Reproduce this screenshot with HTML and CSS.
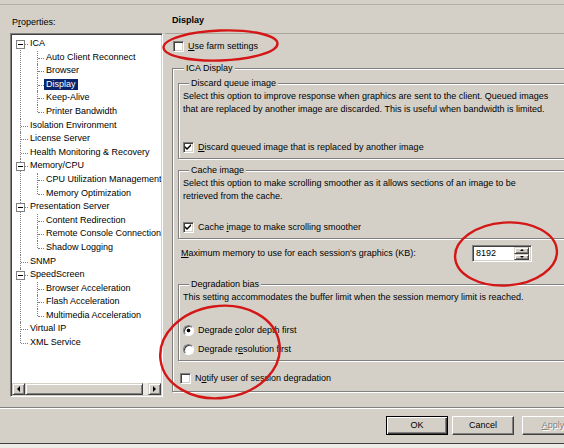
FILE: index.html
```html
<!DOCTYPE html>
<html>
<head>
<meta charset="utf-8">
<link rel="stylesheet" href="styles.css">
</head>
<body>
<div class="window">
  <div class="main">
    <div class="left">
      <div class="lbl">P<u>r</u>operties:</div>
      <div class="treebox">
        <ul class="tree">
          <li><span class="exp"></span>ICA
            <ul>
              <li>Auto Client Reconnect</li>
              <li>Browser</li>
              <li><span class="sel">Display</span></li>
              <li>Keep-Alive</li>
              <li>Printer Bandwidth</li>
            </ul>
          </li>
          <li>Isolation Environment</li>
          <li>License Server</li>
          <li>Health Monitoring &amp; Recovery</li>
          <li><span class="exp"></span>Memory/CPU
            <ul>
              <li>CPU Utilization Management</li>
              <li>Memory Optimization</li>
            </ul>
          </li>
          <li><span class="exp"></span>Presentation Server
            <ul>
              <li>Content Redirection</li>
              <li>Remote Console Connection</li>
              <li>Shadow Logging</li>
            </ul>
          </li>
          <li>SNMP</li>
          <li><span class="exp"></span>SpeedScreen
            <ul>
              <li>Browser Acceleration</li>
              <li>Flash Acceleration</li>
              <li>Multimedia Acceleration</li>
            </ul>
          </li>
          <li>Virtual IP</li>
          <li>XML Service</li>
        </ul>
        <div class="hscroll">
          <div class="sbtn"><span class="arr-l"></span></div>
          <div class="thumb"></div>
          <div class="track"></div>
          <div class="sbtn"><span class="arr-r"></span></div>
        </div>
      </div>
    </div>
    <div class="right">
      <div class="title">Display</div>
      <div class="chk farm"><span class="cb"></span><span><u>U</u>se farm settings</span></div>
      <div class="group ica">
        <div class="legend">ICA Display</div>
        <div class="group sub discard">
          <div class="legend">Discard queue image</div>
          <p class="desc">Select this option to improve response when graphics are sent to the client. Queued images<br>that are replaced by another image are discarded. This is useful when bandwidth is limited.</p>
          <div class="chk gap-a"><span class="cb"><svg viewBox="0 0 7 7" width="7" height="7"><path d="M0 2L2 4L6 0L6 2L2 6L0 4Z" fill="#000"/></svg></span><span><u>D</u>iscard queued image that is replaced by another image</span></div>
        </div>
        <div class="group sub cache">
          <div class="legend">Cache image</div>
          <p class="desc">Select this option to make scrolling smoother as it allows sections of an image to be<br>retrieved from the cache.</p>
          <div class="chk gap-b"><span class="cb"><svg viewBox="0 0 7 7" width="7" height="7"><path d="M0 2L2 4L6 0L6 2L2 6L0 4Z" fill="#000"/></svg></span><span>Cache <u>i</u>mage to make scrolling smoother</span></div>
        </div>
        <div class="memrow">
          <span class="memlbl"><u>M</u>aximum memory to use for each session's graphics (KB):</span>
          <div class="spin">
            <span class="val">8192</span>
            <div class="spinbtns">
              <div class="sb"><span class="arr-u"></span></div>
              <div class="sb"><span class="arr-d"></span></div>
            </div>
          </div>
        </div>
        <div class="group sub degr">
          <div class="legend">Degradation bias</div>
          <p class="desc">This setting accommodates the buffer limit when the session memory limit is reached.</p>
          <div class="chk r1"><span class="radio on"></span><span>Degrade <u>c</u>olor depth first</span></div>
          <div class="chk r2"><span class="radio"></span><span>Degrade r<u>e</u>solution first</span></div>
        </div>
        <div class="chk notify"><span class="cb"></span><span>N<u>o</u>tify user of session degradation</span></div>
      </div>
    </div>
  </div>
  <div class="sep"></div>
  <div class="buttons">
    <div class="btn def">OK</div>
    <div class="btn">Cancel</div>
    <div class="btn dis"><u>A</u>pply</div>
  </div>
  <div class="bottomline"></div>
  <svg class="marks" width="564" height="448" viewBox="0 0 564 448">
    <ellipse cx="220.5" cy="45.5" rx="57" ry="15" transform="rotate(-2 220.5 45.5)"/>
    <ellipse cx="506" cy="254" rx="51" ry="31.5" transform="rotate(-4 506 254)"/>
    <ellipse cx="220" cy="352" rx="60" ry="46" transform="rotate(-8 220 352)"/>
  </svg>
</div>
</body>
</html>
```

FILE: styles.css
```css
* { box-sizing: border-box; }
html, body { margin: 0; padding: 0; }
body {
  width: 564px;
  height: 448px;
  overflow: hidden;
  background: #d4d0c8;
  color: #000;
  font-family: "Liberation Sans", Arial, sans-serif;
  font-size: 9px;
  line-height: 13px;
}
u { text-decoration: underline; text-underline-offset: 1px; }
.window {
  position: relative;
  width: 592px;
  height: 448px;
  display: flex;
  flex-direction: column;
}
.main {
  margin-top: 4px;
  height: 403px;
  border-top: 1px solid #b4b0a8;
  display: flex;
}

/* left column */
.left { width: 165px; flex: none; padding: 11px 0 0 10px; }
.lbl { height: 13px; padding-left: 2px; }
.treebox {
  margin-top: 4px;
  width: 153px;
  height: 364px;
  padding: 1px;
  background: #fff;
  border: 1px solid;
  border-color: #808080 #fff #fff #808080;
  box-shadow: inset 1px 1px #404040, inset -1px -1px #d4d0c8;
  display: flex;
  flex-direction: column;
}
.tree {
  list-style: none;
  margin: 0;
  padding: 2px 0 0;
  flex: 1;
  overflow: hidden;
  white-space: nowrap;
}
.tree ul { list-style: none; margin: 0; padding: 0; }
.tree li {
  position: relative;
  padding-left: 18px;
  line-height: 13.6px;
}
.tree li::before {
  content: "";
  position: absolute;
  left: 8px;
  top: 0;
  bottom: 0;
  border-left: 1px dotted #808080;
}
.tree > li:first-child::before { top: 7px; }
.tree li:last-child::before { bottom: auto; height: 7px; }
.tree li::after {
  content: "";
  position: absolute;
  left: 9px;
  top: 7px;
  width: 7px;
  border-top: 1px dotted #808080;
}
.tree li li { padding-left: 16px; }
.tree li li::before { left: 7px; }
.tree li li::after { left: 8px; width: 6px; }
.exp {
  position: absolute;
  left: 4px;
  top: 3px;
  width: 9px;
  height: 9px;
  border: 1px solid #808080;
  background: #fff;
  z-index: 1;
}
.exp::before {
  content: "";
  position: absolute;
  left: 1px;
  top: 3px;
  width: 5px;
  height: 1px;
  background: #000;
}
.sel {
  display: inline-block;
  line-height: 11px;
  margin-left: -2px;
  padding: 0 2px;
  background: #0a246a;
  color: #fff;
}
.hscroll {
  height: 12px;
  display: flex;
  background: #ebe9e4;
}
.sbtn, .thumb {
  background: #d4d0c8;
  border: 1px solid;
  border-color: #d4d0c8 #404040 #404040 #d4d0c8;
  box-shadow: inset 1px 1px #fff, inset -1px -1px #808080;
}
.sbtn { width: 13px; display: flex; align-items: center; justify-content: center; }
.thumb { width: 118px; }
.track { flex: 1; }
.arr-l { width: 0; height: 0; border: 3px solid transparent; border-left: 0; border-right: 3px solid #000; }
.arr-r { width: 0; height: 0; border: 3px solid transparent; border-right: 0; border-left: 3px solid #000; }

/* right column */
.right { flex: 1; display: flex; flex-direction: column; min-width: 0; }
.title {
  height: 29px;
  padding: 2px 0 0 7px;
  line-height: 26px;
  font-weight: bold;
  border-bottom: 1px solid #aaa69e;
}
.chk { display: flex; align-items: center; height: 13px; gap: 4px; white-space: nowrap; }
.cb {
  flex: none;
  width: 11px;
  height: 11px;
  background: #fff;
  border: 1px solid;
  border-color: #808080 #fff #fff #808080;
  box-shadow: inset 1px 1px #404040, inset -1px -1px #d4d0c8;
  display: flex;
  align-items: center;
  justify-content: center;
}
.radio {
  flex: none;
  width: 11px;
  height: 11px;
  border-radius: 50%;
  background: #fff;
  border: 1px solid;
  border-color: #808080 #fff #fff #808080;
  box-shadow: inset 1px 1px #404040;
}
.radio.on { background: radial-gradient(circle, #000 0 1.6px, #fff 2.2px); }
.farm { margin: 6px 0 0 8px; }
.group {
  border: 1px solid #808080;
  box-shadow: 1px 1px #fff, inset 1px 1px #fff;
}
.legend {
  display: table;
  margin: -7px 0 0 6px;
  padding: 0 2px;
  line-height: 13px;
  background: #d4d0c8;
  white-space: nowrap;
}
.ica { margin: 15px 8px 0 7px; padding: 0 4px 6px 5px; }
.sub { padding: 0 4px 4px 4px; }
.discard { margin-top: 8px; }
.cache { margin-top: 11px; }
.degr { margin-top: 22px; }
.desc { margin: 0; white-space: nowrap; }
.gap-a { margin-top: 25px; }
.gap-b { margin-top: 18px; }
.r1 { margin-top: 20px; }
.r2 { margin-top: 6px; }
.notify { margin: 11px 0 0 2px; }
.memrow { display: flex; align-items: center; height: 17px; margin-top: 6px; white-space: nowrap; }
.memlbl { width: 294px; padding-left: 3px; }
.spin {
  width: 60px;
  height: 17px;
  background: #fff;
  border: 1px solid;
  border-color: #808080 #fff #fff #808080;
  box-shadow: inset 1px 1px #404040, inset -1px -1px #d4d0c8;
  display: flex;
  align-items: center;
  padding: 2px;
}
.val { flex: 1; padding-left: 1px; }
.spinbtns { width: 15px; height: 13px; display: flex; flex-direction: column; }
.sb {
  flex: 1;
  background: #d4d0c8;
  border: 1px solid;
  border-color: #d4d0c8 #404040 #404040 #d4d0c8;
  box-shadow: inset 1px 1px #fff, inset -1px -1px #808080;
  display: flex;
  align-items: center;
  justify-content: center;
}
.arr-u { width: 0; height: 0; border: 2px solid transparent; border-top: 0; border-bottom: 2px solid #000; }
.arr-d { width: 0; height: 0; border: 2px solid transparent; border-bottom: 0; border-top: 2px solid #000; }

/* bottom */
.sep { height: 2px; border-top: 1px solid #808080; border-bottom: 1px solid #fff; }
.buttons { height: 34px; display: flex; gap: 4px; padding: 7px 0 0 386px; }
.btn {
  width: 62px;
  height: 19px;
  line-height: 17px;
  text-align: center;
  background: #d4d0c8;
  border: 1px solid;
  border-color: #fff #404040 #404040 #fff;
  box-shadow: inset -1px -1px #808080;
}
.btn.def {
  border-color: #000;
  box-shadow: inset 1px 1px #fff, inset -1px -1px #404040, inset -2px -2px #808080;
}
.btn.dis { margin-left: 4px; color: #808080; text-shadow: 1px 1px #fff; }
.bottomline { height: 5px; border-top: 1px solid #404040; background: #ecebe6; }
.marks {
  position: absolute;
  left: 0;
  top: 0;
  pointer-events: none;
  fill: none;
  stroke: #d41616;
  stroke-width: 2.4;
}
```
